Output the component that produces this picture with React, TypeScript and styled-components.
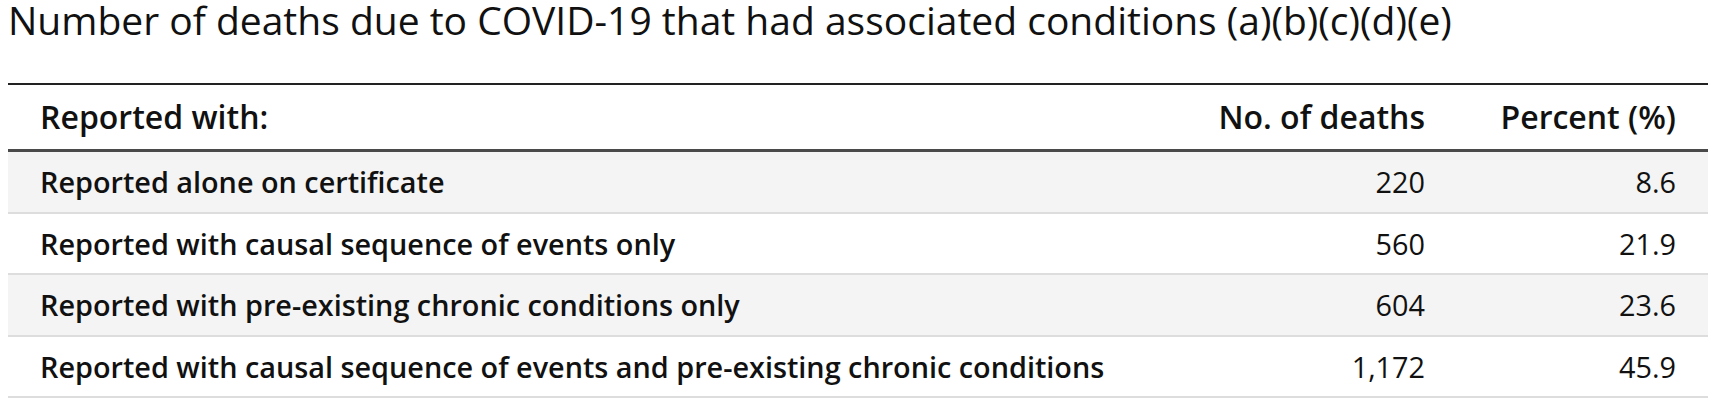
import styled, { createGlobalStyle } from 'styled-components';

const GlobalStyle = createGlobalStyle`
  html, body {
    margin: 0;
    padding: 0;
    background: #ffffff;
  }
  body {
    font-family: "Open Sans", "Noto Sans", Arial, sans-serif;
    color: #111111;
  }
`;

const Page = styled.div`
  padding: 0 8px;
`;

const Title = styled.h1`
  margin: 0 0 44px;
  font-size: 39px;
  font-weight: 400;
  line-height: 39px;
  color: #111111;
`;

const Table = styled.table`
  width: 1700px;
  border-collapse: separate;
  border-spacing: 0;
  table-layout: fixed;
`;

const HeadCell = styled.th<{ $numeric?: boolean }>`
  padding: 10px 32px;
  font-size: 32px;
  line-height: 44px;
  font-weight: 600;
  text-align: ${(p) => (p.$numeric ? 'right' : 'left')};
  vertical-align: middle;
  border-top: 2px solid #222222;
  border-bottom: 3px solid #4a4a4a;
`;

const Row = styled.tr<{ $shaded?: boolean }>`
  background: ${(p) => (p.$shaded ? '#f4f4f4' : '#ffffff')};
`;

const Cell = styled.td<{ $numeric?: boolean }>`
  padding: 10px 32px;
  font-size: 28.8px;
  line-height: 39.5px;
  font-weight: ${(p) => (p.$numeric ? 400 : 600)};
  text-align: ${(p) => (p.$numeric ? 'right' : 'left')};
  vertical-align: middle;
  border-bottom: 2px solid #dddddd;
`;

const rows = [
  { label: 'Reported alone on certificate', deaths: '220', percent: '8.6' },
  { label: 'Reported with causal sequence of events only', deaths: '560', percent: '21.9' },
  { label: 'Reported with pre-existing chronic conditions only', deaths: '604', percent: '23.6' },
  {
    label: 'Reported with causal sequence of events and pre-existing chronic conditions',
    deaths: '1,172',
    percent: '45.9',
  },
];

export default function App() {
  return (
    <Page>
      <GlobalStyle />
      <Title>Number of deaths due to COVID-19 that had associated conditions (a)(b)(c)(d)(e)</Title>
      <Table>
        <colgroup>
          <col />
          <col style={{ width: 300 }} />
          <col style={{ width: 251 }} />
        </colgroup>
        <thead>
          <tr>
            <HeadCell>Reported with:</HeadCell>
            <HeadCell $numeric>No. of deaths</HeadCell>
            <HeadCell $numeric>Percent (%)</HeadCell>
          </tr>
        </thead>
        <tbody>
          {rows.map((r, i) => (
            <Row key={r.label} $shaded={i % 2 === 0}>
              <Cell>{r.label}</Cell>
              <Cell $numeric>{r.deaths}</Cell>
              <Cell $numeric>{r.percent}</Cell>
            </Row>
          ))}
        </tbody>
      </Table>
    </Page>
  );
}
